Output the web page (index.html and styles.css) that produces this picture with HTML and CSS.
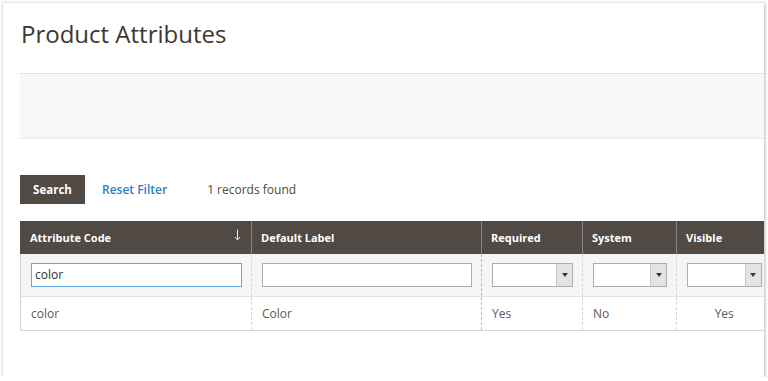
FILE: index.html
```html
<!DOCTYPE html>
<html>
<head>
<meta charset="utf-8">
<link rel="stylesheet" href="styles.css">
</head>
<body>
<div class="panel">
  <h1 class="title">Product Attributes</h1>
  <div class="band"></div>
  <div class="toolbar">
    <button class="btn">Search</button>
    <a class="reset">Reset Filter</a>
    <span class="count">1 records found</span>
  </div>
  <table class="grid">
    <colgroup>
      <col class="c1"><col class="c2"><col class="c3"><col class="c4"><col class="c5">
    </colgroup>
    <thead>
      <tr class="head">
        <th><div class="th-sort"><span>Attribute Code</span><svg class="arrow" width="7" height="12" viewBox="0 0 7 12"><path d="M3.5 0.5V10.5M1 8L3.5 11L6 8" fill="none" stroke="#e8e8e8" stroke-width="1"/></svg></div></th>
        <th>Default Label</th>
        <th>Required</th>
        <th>System</th>
        <th>Visible</th>
      </tr>
      <tr class="filters">
        <td><input class="inp focus" type="text" value="color"></td>
        <td><input class="inp" type="text" value=""></td>
        <td class="dark"><div class="sel"><span class="sel-btn"></span></div></td>
        <td><div class="sel"><span class="sel-btn"></span></div></td>
        <td><div class="sel"><span class="sel-btn"></span></div></td>
      </tr>
    </thead>
    <tbody>
      <tr class="row">
        <td>color</td>
        <td>Color</td>
        <td class="dark">Yes</td>
        <td>No</td>
        <td class="center">Yes</td>
      </tr>
    </tbody>
  </table>
</div>
</body>
</html>
```

FILE: styles.css
```css
* { box-sizing: border-box; }
html, body { margin: 0; padding: 0; background: #ffffff; }
body {
  font-family: "Open Sans", "Liberation Sans", sans-serif;
  padding: 2px 4px 0 2px;
}
.panel {
  background: #fff;
  height: 375px;
  padding: 14px 0 0 17px;
  overflow: hidden;
  box-shadow: 1px 1px 3px rgba(0,0,0,0.28);
  border-left: 1px solid #e6e6e6;
  border-top: 1px solid #e8e8e8;
}
.title {
  margin: 0;
  padding-left: 1px;
  font-size: 24px;
  line-height: 34px;
  font-weight: 400;
  color: #41362f;
}
.band {
  margin-top: 22px;
  height: 66px;
  background: #f8f8f8;
  border-top: 1px solid #e3e3e3;
  border-bottom: 2px solid #eeeeee;
}
.toolbar {
  margin-top: 36px;
  display: flex;
  align-items: center;
  height: 29px;
}
.btn {
  height: 29px;
  width: 65px;
  background: #514943;
  border: 1px solid #514943;
  color: #fff;
  font-family: inherit;
  font-size: 11.5px;
  font-weight: 700;
  padding: 0;
}
.reset {
  margin-left: 17px;
  color: #2a80c9;
  font-size: 12px;
  font-weight: 600;
}
.count {
  margin-left: 40px;
  color: #514943;
  font-size: 12px;
}
.grid {
  margin-top: 17px;
  border-collapse: collapse;
  table-layout: fixed;
  width: 750px;
  font-size: 12px;
}
.c1 { width: 231px; }
.c2 { width: 230px; }
.c3 { width: 101px; }
.c4 { width: 94px; }
.c5 { width: 94px; }
.head th {
  background: #514943;
  color: #fff;
  height: 33px;
  text-align: left;
  font-size: 11px;
  font-weight: 700;
  padding: 0 9px;
  border-left: 1px solid #8a837f;
  border-right: 1px solid #8a837f;
}
.head th:first-child { border-left: 1px solid #514943; }
.th-sort { display: flex; justify-content: space-between; align-items: center; }
.arrow { display: block; margin-top: -6px; margin-right: 1px; }
.filters td {
  background: #f5f5f5;
  height: 42px;
  padding: 0 9px 0 10px;
  border-left: 1px dashed #d6d6d6;
  border-bottom: 1px solid #e3e3e3;
  vertical-align: middle;
}
.filters td:first-child { border-left: 1px solid #d6d6d6; }
.inp {
  display: block;
  width: 100%;
  height: 24px;
  border: 1px solid #adadad;
  background: #fff;
  font-family: inherit;
  font-size: 12px;
  color: #303030;
  padding: 0 3px;
  outline: none;
}
.inp.focus { border-color: #68a8e0; }
.sel {
  height: 24px;
  border: 1px solid #adadad;
  background: #fff;
  display: flex;
  justify-content: flex-end;
}
.sel-btn {
  width: 16px;
  background: #e3e3e3;
  border-left: 1px solid #c9c9c9;
  display: flex;
  align-items: center;
  justify-content: center;
}
.sel-btn::after {
  content: "";
  border-left: 3.5px solid transparent;
  border-right: 3.5px solid transparent;
  border-top: 4px solid #41362f;
  margin-top: 1px;
}
.row td {
  height: 34px;
  padding: 0 9px 0 10px;
  color: #5a5a5a;
  border-left: 1px dashed #d6d6d6;
  border-bottom: 1px solid #d6d6d6;
}
.row td:first-child { border-left: 1px solid #d6d6d6; }
.filters td.dark, .row td.dark { border-left: 1px dashed #b8b8b8; }
.center { text-align: center; }
```
